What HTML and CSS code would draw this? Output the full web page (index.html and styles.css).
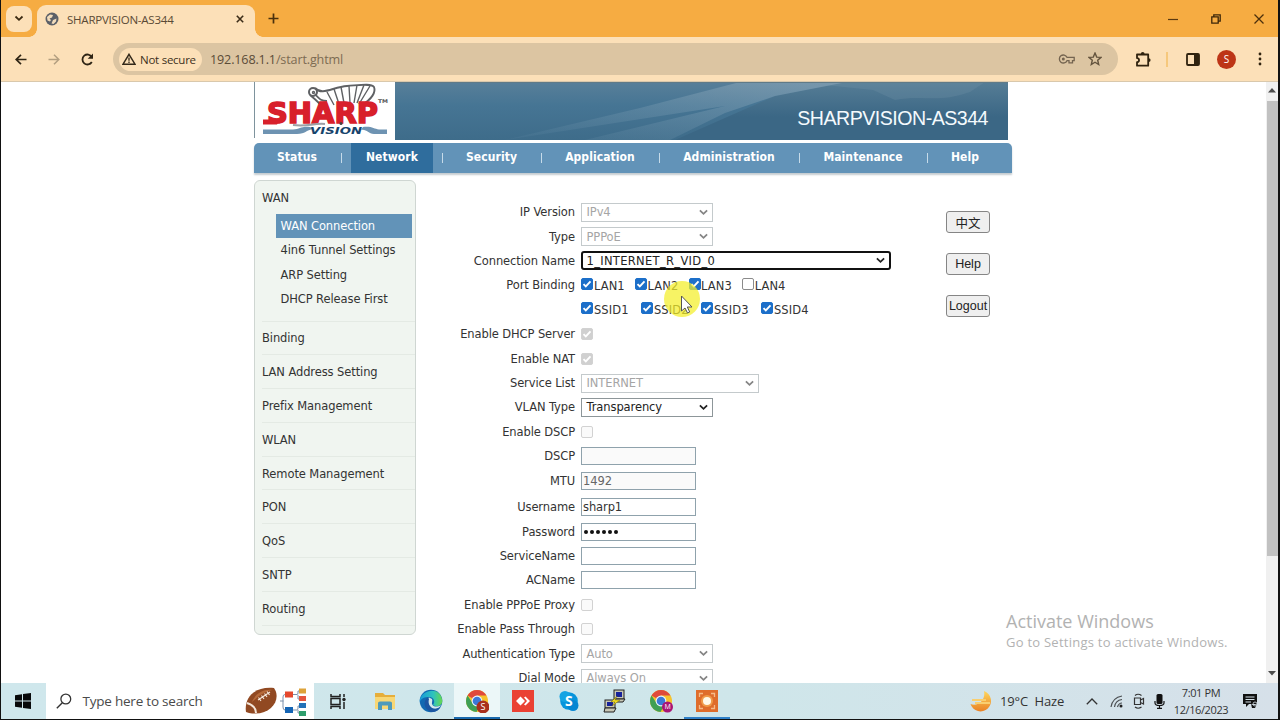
FILE: index.html
```html
<!DOCTYPE html>
<html lang="en">
<head>
<meta charset="utf-8">
<title>SHARPVISION-AS344</title>
<link rel="stylesheet" href="styles.css">
</head>
<body>
<svg width="0" height="0" class="defs">
  <symbol id="chev" viewBox="0 0 10 7"><path d="M1 1.2 5 5 9 1.2" fill="none" stroke="currentColor" stroke-width="2"/></symbol>
  <symbol id="tick" viewBox="0 0 12 12"><path d="M2.5 6.2 4.8 8.5 9.5 3.4" fill="none" stroke="currentColor" stroke-width="1.9"/></symbol>
  <symbol id="chrome" viewBox="0 0 24 24">
    <circle cx="12" cy="12" r="11" fill="#f6c32c"/>
    <path d="M12 12 2.5 6.5A11 11 0 0 1 21.5 6.5H12Z" fill="#df4a3c"/>
    <path d="M2.5 6.5A11 11 0 0 0 11.5 23L16 15 12 12 7.5 14Z" fill="#3f9f55"/>
    <circle cx="12" cy="12" r="5.4" fill="#eef5ff"/><circle cx="12" cy="12" r="4.3" fill="#3b79d8"/>
  </symbol>
</svg>
<div class="screen">
  <header class="tabs">
    <div class="tabmenu"><svg width="10" height="7"><path d="M1.5 1.5 5 4.8 8.5 1.5" fill="none" stroke="#3a2a12" stroke-width="1.8"/></svg></div>
    <div class="tab">
      <svg width="14" height="14" viewBox="0 0 14 14"><circle cx="7" cy="7" r="6.5" fill="#5c6068"/><path d="M2 5 5 2.6 8 3 7 5.5 4.5 6.5 6 8 5 9.5 2.5 8.5ZM8 8 11.5 6.5 11 9.5 8.5 12 6.5 11.5Z" fill="#f2dcbb"/></svg>
      <span class="tabtitle">SHARPVISION-AS344</span>
      <svg width="8" height="8"><path d="M.8.8 7.2 7.2M7.2.8.8 7.2" stroke="#3c2d18" stroke-width="1.6"/></svg>
    </div>
    <svg class="newtab" width="11" height="11"><path d="M5.5.5V10.5M.5 5.5H10.5" stroke="#4a300c" stroke-width="1.7"/></svg>
    <div class="winbtns">
      <svg width="10" height="10"><path d="M0 5.5H10" stroke="#5b3a10" stroke-width="1.2"/></svg>
      <svg width="10" height="10"><path d="M.8 2.8H7.2V9.2H.8ZM2.8 2.5V.8H9.2V7.2H7.5" fill="none" stroke="#3c2609" stroke-width="1.3"/></svg>
      <svg width="10" height="10"><path d="M.5.5 9.5 9.5M9.5.5.5 9.5" stroke="#4c300c" stroke-width="1.3"/></svg>
    </div>
  </header>
  <div class="toolbar">
    <div class="navbtns">
      <svg width="12" height="11"><path d="M6 .8 1.2 5.5 6 10.2M1.2 5.5H11.5" fill="none" stroke="#2e2414" stroke-width="1.7"/></svg>
      <svg width="12" height="11"><path d="M6 .8 10.8 5.5 6 10.2M10.8 5.5H.5" fill="none" stroke="#b39f80" stroke-width="1.5"/></svg>
      <svg width="13" height="13"><path d="M10.8 9A5 5 0 1 1 10.8 4L11 4.6" fill="none" stroke="#2e2414" stroke-width="1.8"/><path d="M12 .5V5.8H6.7Z" fill="#2e2414"/></svg>
    </div>
    <div class="omni">
      <div class="chip"><svg width="14" height="12"><path d="M7 1.3 13 11.2H1Z" fill="none" stroke="#33291a" stroke-width="1.5"/><path d="M7 4.5V7.8M7 8.5V10" stroke="#33291a" stroke-width="1.3"/></svg><span>Not secure</span></div>
      <span class="url">192.168.1.1<i>/start.ghtml</i></span>
      <svg class="key" width="17" height="10"><path d="M9 3.3A4 4 0 1 0 9 6.7H11V8.8H14.5V6.7H16.2V3.3Z" fill="none" stroke="#746450" stroke-width="1.3"/><circle cx="5.3" cy="5" r="1.5" fill="#746450"/></svg>
      <svg class="star" width="14" height="14"><path d="M7 1.1 8.7 5.1 13 5.4 9.7 8.2 10.7 12.5 7 10.2 3.3 12.5 4.3 8.2 1 5.4 5.3 5.1Z" fill="none" stroke="#64543e" stroke-width="1.4"/></svg>
    </div>
    <svg class="puzzle" width="17" height="17"><path d="M2 3.5H13.2V14.7H2V11.2A2 2 0 0 0 2 7.1Z" fill="none" stroke="#30230f" stroke-width="1.8" stroke-linejoin="round"/><path d="M5.8 3A1.9 1.9 0 0 1 9.6 3ZM13.7 7.2A1.9 1.9 0 0 1 13.7 11Z" fill="#30230f"/></svg>
    <span class="tsep"></span>
    <svg class="panel" width="14" height="13"><rect x="1" y="1" width="12" height="11" rx="1" fill="none" stroke="#30230f" stroke-width="1.8"/><path d="M8 1H13V12H8Z" fill="#30230f"/></svg>
    <span class="avatar">S</span>
    <svg class="dots" width="4" height="14"><g fill="#30230f"><circle cx="2" cy="2" r="1.4"/><circle cx="2" cy="7" r="1.4"/><circle cx="2" cy="12" r="1.4"/></g></svg>
  </div>

  <div class="viewport">
    <main class="page">
      <div class="banner">
        <svg class="logo" width="141" height="58" viewBox="-1 0 141 58">
          <rect x="-1" width="141" height="58" fill="#fff"/><path d="M-.5 0V56" stroke="#7e939d"/>
          <g fill="none" stroke="#5f6164" stroke-width="1.4">
            <circle cx="58" cy="10" r="4" stroke-width="2"/><circle cx="58.5" cy="10.5" r="1"/>
            <path d="M60 6C67 14 78 5 92 4 105 3 116 1 119 5 121 10 117 17 107 23M55 13C60 17 62 19 66 23M60 12C65 18 67 19 72 19" stroke-width="1.9"/>
            <path d="M72 10 79 23M79 7 84 22M86 5 89 21M94 4 95 21M102 3 99 21M109 3 102 21M115 4 104 22"/>
          </g>
          <path d="M8 47.500H38C45 47.500 46 44 55 45L59 47C50 48 51 52 42 52H8ZM108 45C117 44 119 47 124 47.500H132V52H119C113 52 112 47 106 48Z" fill="#6e93b2"/>
          <text x="12" y="41" class="lg-sharp" textLength="111" lengthAdjust="spacingAndGlyphs">SHARP</text>
          <path d="M8 37.500H25L22 42.500H8Z" fill="#d8202b"/>
          <path d="M38 43C52 45 58 41 70 42" fill="none" stroke="#9da1a6" stroke-width="2"/>
          <circle cx="86" cy="41.500" r="1.500" fill="#444"/>
          <text x="55" y="51.500" class="lg-vision" textLength="52" lengthAdjust="spacingAndGlyphs">VISION</text>
          <text x="123" y="21" class="lg-tm" textLength="10" lengthAdjust="spacingAndGlyphs">TM</text>
        </svg>
        <div class="hero">
          <svg class="rays" width="613" height="58" viewBox="0 0 613 58">
            <defs>
              <linearGradient id="hg" x1="0" y1="0" x2="0" y2="1"><stop offset="0" stop-color="#587f99"/><stop offset=".4" stop-color="#467594"/><stop offset="1" stop-color="#3e6c8a"/></linearGradient>
              <linearGradient id="rg" x1="0" y1="1" x2="1" y2="0"><stop offset="0" stop-color="#6890aa" stop-opacity=".1"/><stop offset="1" stop-color="#8ca7b9" stop-opacity=".65"/></linearGradient>
              <linearGradient id="dg" x1="0" y1="0" x2="0" y2="1"><stop offset="0" stop-color="#567d96"/><stop offset=".6" stop-color="#3b6785"/></linearGradient>
            </defs>
            <rect width="613" height="58" fill="url(#hg)"/>
            <path d="M280 58 380 14 450 0H613V58Z" fill="url(#dg)"/>
            <path d="M110 58 245 26 345 0H452L380 14 330 31 275 58H190L330 24Z" fill="url(#rg)"/>
            <path d="M400 0H590L575 10C540 22 530 12 500 18L478 8Z" fill="#7898ab" opacity=".25"/>
            <path d="M0 .5H613" stroke="#607a87"/>
          </svg>
          <span class="model">SHARPVISION-AS344</span>
        </div>
      </div>
      <nav class="menu">
        <a class="m1">Status</a><b></b><a class="on">Network</a><b></b><a class="m3">Security</a><b></b><a class="m4">Application</a><b></b><a class="m5">Administration</a><b></b><a class="m6">Maintenance</a><b></b><a class="m7">Help</a>
      </nav>
      <div class="cols">
        <aside class="side">
          <div class="group">
            <div class="top"><span>WAN</span></div>
            <div class="sub sel"><span>WAN Connection</span></div><div class="sub"><span>4in6 Tunnel Settings</span></div><div class="sub"><span>ARP Setting</span></div><div class="sub"><span>DHCP Release First</span></div>
          </div>
          <div class="item">Binding</div><div class="item">LAN Address Setting</div><div class="item">Prefix Management</div><div class="item">WLAN</div><div class="item">Remote Management</div><div class="item">PON</div><div class="item">QoS</div><div class="item">SNTP</div><div class="item">Routing</div>
        </aside>
        <section class="form">
          <div class="row"><label>IP Version</label><div class="select off">IPv4<svg><use href="#chev"/></svg></div></div>
          <div class="row"><label>Type</label><div class="select off">PPPoE<svg><use href="#chev"/></svg></div></div>
          <div class="row"><label>Connection Name</label><div class="select focus">1_INTERNET_R_VID_0<svg><use href="#chev"/></svg></div></div>
          <div class="row"><label>Port Binding</label><div class="checks lan">
            <span><i class="cb on"><svg><use href="#tick"/></svg></i>LAN1</span><span><i class="cb on"><svg><use href="#tick"/></svg></i>LAN2</span><span><i class="cb on"><svg><use href="#tick"/></svg></i>LAN3</span><span><i class="cb"></i>LAN4</span></div></div>
          <div class="row"><label></label><div class="checks ssid">
            <span><i class="cb on"><svg><use href="#tick"/></svg></i>SSID1</span><span><i class="cb on"><svg><use href="#tick"/></svg></i>SSID2</span><span><i class="cb on"><svg><use href="#tick"/></svg></i>SSID3</span><span><i class="cb on"><svg><use href="#tick"/></svg></i>SSID4</span></div></div>
          <div class="row"><label>Enable DHCP Server</label><i class="cb dis full"><svg><use href="#tick"/></svg></i></div>
          <div class="row"><label>Enable NAT</label><i class="cb dis full"><svg><use href="#tick"/></svg></i></div>
          <div class="row"><label>Service List</label><div class="select off wide">INTERNET<svg><use href="#chev"/></svg></div></div>
          <div class="row"><label>VLAN Type</label><div class="select">Transparency<svg><use href="#chev"/></svg></div></div>
          <div class="row"><label>Enable DSCP</label><i class="cb dis"></i></div>
          <div class="row"><label>DSCP</label><div class="text off"></div></div>
          <div class="row"><label>MTU</label><div class="text off">1492</div></div>
          <div class="row gap"><label>Username</label><div class="text">sharp1</div></div>
          <div class="row"><label>Password</label><div class="text pw"><u></u><u></u><u></u><u></u><u></u><u></u></div></div>
          <div class="row"><label>ServiceName</label><div class="text"></div></div>
          <div class="row"><label>ACName</label><div class="text"></div></div>
          <div class="row"><label>Enable PPPoE Proxy</label><i class="cb dis"></i></div>
          <div class="row"><label>Enable Pass Through</label><i class="cb dis"></i></div>
          <div class="row"><label>Authentication Type</label><div class="select off">Auto<svg><use href="#chev"/></svg></div></div>
          <div class="row"><label>Dial Mode</label><div class="select off">Always On<svg><use href="#chev"/></svg></div></div>
        </section>
        <div class="actions"><div class="btn zh">中文</div><div class="btn">Help</div><div class="btn">Logout</div></div>
      </div>
    </main>
    <div class="scroll">
      <svg width="8" height="5"><path d="M0 4.500 4 0 8 4.500Z" fill="#4b4b4b"/></svg>
      <div class="thumb"></div>
      <svg class="down" width="8" height="5"><path d="M0 0 4 4.500 8 0Z" fill="#4b4b4b"/></svg>
    </div>
  </div>

  <footer class="taskbar">
    <div class="start"><svg width="16" height="16"><path d="M0 2.300 7 1.200V7.500H0ZM8 1 16 0V7.500H8ZM0 8.500H7V14.800L0 13.700ZM8 8.500H16V16L8 15Z" fill="#08090a"/></svg></div>
    <div class="search">
      <svg width="16" height="16"><circle cx="9.800" cy="6" r="4.900" fill="none" stroke="#333" stroke-width="1.300"/><path d="M6.300 9.700.8 15.200" stroke="#333" stroke-width="1.400"/></svg>
      <span>Type here to search</span>
      <svg class="ball" width="64" height="32" viewBox="0 0 64 32">
        <path d="M35 16H38.500M48 9.500H40Q38 9.500 38 12V22Q38 25 40 25H48M48 9.500H52Q53 9.500 53 8V6H55M53 10V14H56M48 25H52Q53 25 53 23V21H56M53 25V28H56" fill="none" stroke="#7b8faa"/>
        <rect x="40" y="6.500" width="8" height="6" fill="#e5482d"/><rect x="40" y="22" width="8" height="6" fill="#1464b4"/>
        <rect x="54" y="3.500" width="7" height="5" fill="#dda33a"/><rect x="54" y="11" width="7" height="5" fill="#e5553d"/><rect x="54" y="18" width="7" height="5" fill="#2372b8"/><rect x="54" y="26" width="7" height="5" fill="#2f9e6d"/>
        <path d="M1 27C-1 14 8 1 29 3 37 14 26 32 4 28Z" fill="#914922"/><path d="M7 17C10 9 18 4 27 5 18 7 13 12 7 17Z" fill="#b66a3a"/>
        <path d="M2 18C8 20 11 24 11 28" stroke="#f4e6da" fill="none" stroke-width="2"/><path d="M13 15 25 7M13.500 12.500 16 16M16.500 10.500 19 14M19.500 8.500 22 12M22 6.500 24.500 10" stroke="#f4e6da" fill="none" stroke-width="1.200"/>
      </svg>
    </div>
    <div class="apps">
      <div class="app"><svg width="16" height="15"><path d="M1 0V2.500H10V0M1 15V12.500H10V15M1 4.500H10V10.500H1ZM14 0V3M14 8V15" fill="none" stroke="#222" stroke-width="1.500"/><circle cx="14" cy="5.500" r="1.700" fill="#222"/></svg></div>
      <div class="app"><svg width="22" height="19"><path d="M1 1H9L11 3H21V17H1Z" fill="#e6ae3b"/><path d="M1 5H21V17H1Z" fill="#f8d775"/><path d="M4 18V11Q4 9.500 6 9.500H16Q18 9.500 18 11V18H14V13.500H8V18Z" fill="#4f9abb"/></svg></div>
      <div class="app"><svg width="24" height="24" viewBox="0 0 24 24"><defs><linearGradient id="eg" x1="0" x2="1"><stop offset="0" stop-color="#189bd8"/><stop offset=".6" stop-color="#2fc3bd"/><stop offset="1" stop-color="#66d84e"/></linearGradient></defs><circle cx="12" cy="12" r="11.300" fill="#1269b2"/><path d="M.8 11C3 0 22-3 23.300 12 23 18 16 18 14 16 17 12 14 8 10 8 6 8 2 9 .8 13Z" fill="url(#eg)"/><path d="M10 8.500C5 12 8 21 15 20 19 20 21 18 22 16 19 18 15 18 13.500 16 12 14 14 12 13 10Z" fill="#d3e8ec"/><path d="M9 8.500C4 11 4 20 12 23 17 23 20 21 21 18.500 14 22 8 17 10 10Z" fill="#1b56a2"/></svg></div>
      <div class="app lit"><svg width="24" height="24"><use href="#chrome"/><circle cx="18" cy="18" r="6.500" fill="#a92f1d"/></svg><em>S</em></div>
      <div class="app"><svg width="22" height="22"><rect width="22" height="22" fill="#ea4133"/><path d="M8.500 6.500 13 11 8.500 15.500 4 11ZM12 7.500 13.500 6.500 18 11 13.500 15.500 12 14.500 15 11Z" fill="#fff"/></svg></div>
      <div class="app"><svg width="20" height="22"><circle cx="10" cy="11" r="8.800" fill="#0795dc"/><circle cx="6" cy="6.500" r="5.500" fill="#15a4e3"/><circle cx="14" cy="15.500" r="5.500" fill="#0786d2"/></svg><em class="sk">S</em></div>
      <div class="app"><svg width="24" height="24"><g stroke="#222" fill="#c7c7b5"><rect x="11" y="1" width="10" height="9"/><path d="M11 10H22L20 13H10Z"/><rect x="2" y="11" width="10" height="8"/><path d="M2 19H13L11 23H1Z"/></g><rect x="13" y="3" width="6" height="5" fill="#16229a"/><rect x="4" y="13" width="6" height="4" fill="#16229a"/><path d="M14 7 8 13H12L9 17 17 11H12Z" fill="#f4df20" stroke="#756b10" stroke-width=".5"/></svg></div>
      <div class="app"><svg width="24" height="24"><use href="#chrome"/><circle cx="18.500" cy="18" r="5.500" fill="#a81576"/></svg><em class="pm">M</em></div>
      <div class="app under"><svg width="22" height="22"><rect width="22" height="22" fill="#df6d2b"/><path d="M3.500 7V3.500H7M15 3.500H18.500V7M18.500 15V18.500H15M7 18.500H3.500V15" stroke="#f5bb88" fill="none" stroke-width="1.300"/><circle cx="11" cy="11" r="6" fill="#f09b49"/><circle cx="11" cy="11" r="4" fill="#fff9e9"/></svg></div>
    </div>
    <div class="tray">
      <svg class="moon" width="22" height="21"><defs><linearGradient id="mg" x1="0" y1="0" x2="0" y2="1"><stop offset="0" stop-color="#ffd75c"/><stop offset="1" stop-color="#e98125"/></linearGradient></defs><path d="M14 0A10.500 10.500 0 1 1 .5 13C8 16 16 9 14 0Z" fill="url(#mg)"/><path d="M2 9H16M5 12H20" stroke="#f9cf70" stroke-width="2"/></svg>
      <span class="wx">19°C&nbsp; Haze</span>
      <svg class="up" width="12" height="7"><path d="M.8 6.200 6 1 11.200 6.200" fill="none" stroke="#333" stroke-width="1.300"/></svg>
      <svg class="wifi" width="13" height="13"><path d="M1 12C2 6 6 2 12 1M4.500 12C5 8 8 5 12 4.500M7.500 12C8 10 10 8 12 8" fill="none" stroke="#4b4f52" stroke-width="1.200"/><circle cx="11" cy="11" r="1.500" fill="#222"/></svg>
      <svg class="meet" width="12" height="16"><path d="M1.500 5H7.500V11.500H1.500ZM7.500 7 10.500 5.500V11L7.500 9.500M2 2.500Q5 0 8.500 2.500M2 14Q5 16.500 8.500 14" fill="none" stroke="#333" stroke-width="1.200"/></svg>
      <svg class="mic" width="11" height="15"><rect x="2.500" y="0" width="6" height="10" rx="1.500" fill="#111"/><path d="M1 7V9Q1 11.500 5.500 11.500 10 11.500 10 9V7M5.500 11V14M3 14.300H8" fill="none" stroke="#111" stroke-width="1.200"/></svg>
      <div class="clock"><span>7:01 PM</span><span>12/16/2023</span></div>
      <svg class="note" width="17" height="16"><path d="M1 1H15V11H7L4 14V11H1Z" fill="#111"/><path d="M3.500 4H12.500M3.500 6.500H12.500M3.500 9H9" stroke="#d5e1e8"/><path d="M9 11A4 3 0 0 0 15 11L13 15H10Z" fill="#111"/><circle cx="13" cy="11" r="2" fill="none" stroke="#d5e1e8" stroke-width=".8"/></svg>
    </div>
  </footer>
</div>
<div class="activate"><p>Activate Windows</p><small>Go to Settings to activate Windows.</small></div>
<svg class="pointer" width="38" height="38"><circle cx="18" cy="18" r="18" fill="#f4ee28" opacity=".72"/><path d="M17.500 15V30L21 27 23.500 32 25.700 31 23.300 26H28Z" fill="#fff" stroke="#555" stroke-width="1"/></svg>
</body>
</html>
```
FILE: styles.css
```css
*{box-sizing:border-box}
body{margin:0;width:1280px;height:720px;overflow:hidden;position:relative;background:#111;font-family:"Open Sans","Noto Sans",sans-serif}
svg{display:block;flex:none}
.defs{position:absolute}
.screen{width:1280px;height:720px;padding:0 2px 1px 1px;display:flex;flex-direction:column}
.tabs{height:37px;background:#f6ac42;display:flex;align-items:center;flex:none;position:relative}
.tabmenu{width:26px;height:26px;border-radius:8px;background:#fce0b8;margin-left:5px;display:flex;align-items:center;justify-content:center}
.tab{width:218px;height:32px;align-self:flex-end;margin-left:5px;background:#fce0b8;border-radius:9px 9px 0 0;display:flex;align-items:center;padding:0 11px 4px 8px;position:relative}
.tab:before,.tab:after{content:"";position:absolute;bottom:0;width:8px;height:8px}
.tab:before{left:-8px;background:radial-gradient(circle at 0 0,transparent 7.5px,#fce0b8 8px)}
.tab:after{right:-8px;background:radial-gradient(circle at 100% 0,transparent 7.5px,#fce0b8 8px)}
.tabtitle{font-size:11.5px;color:#5a4a36;margin-left:8px;flex:1;letter-spacing:-.22px;white-space:nowrap}
.newtab{margin-left:13px}
.winbtns{margin-left:auto;display:flex;gap:33px;padding-right:14px}
.toolbar{height:45px;background:#fce0b8;border-bottom:1px solid #d9c8ac;flex:none;display:flex;align-items:center}
.navbtns{display:flex;align-items:center;gap:21px;margin-left:14px;width:98px}
.omni{width:1005px;height:32px;border-radius:16px;background:#dcc5a2;display:flex;align-items:center;padding-left:6px}
.chip{width:83px;height:23px;border-radius:12px;background:#fce0b8;display:flex;align-items:center;padding-left:3px;font-size:11.5px;letter-spacing:-.25px;color:#3c3020;white-space:nowrap}
.chip span{margin-left:4px}
.url{font-size:12.6px;letter-spacing:-.15px;color:#5b4c38;margin-left:8px;flex:1}
.url i{font-style:normal;color:#7c6b52}
.key{margin-right:13.5px}.star{margin-right:16px}
.puzzle{margin-left:17px}
.tsep{width:2px;height:15px;background:#f6c87c;margin:0 18px 0 14px}
.avatar{width:19px;height:19px;border-radius:50%;background:#bd3516;color:#fff;font-size:10px;display:flex;align-items:center;justify-content:center;margin:0 22px 0 17px}
.viewport{height:601px;background:#fff;display:flex;overflow:hidden;flex:none}
.page{width:758px;margin-left:253px;flex:none;font:11.5px "DejaVu Sans",sans-serif;letter-spacing:-.1px;color:#333}
.banner{display:flex;height:58px}
.hero{width:613px;height:58px;position:relative}
.rays{position:absolute}
.model{position:absolute;right:20px;top:25px;font:19.6px/23px "Liberation Sans",Arial,sans-serif;color:#f4fafd;letter-spacing:-.5px}
.lg-sharp{font:bold 29px "DejaVu Sans",sans-serif;letter-spacing:0;fill:#d8202b;stroke:#d8202b;stroke-width:1.6}
.lg-vision{font:italic bold 9.5px "DejaVu Sans",sans-serif;letter-spacing:0;fill:#17446b}
.lg-tm{font:bold 5px "DejaVu Sans",sans-serif;letter-spacing:0;fill:#555}
.menu{height:30px;margin-top:3px;background:#6293b8;border-radius:5px 5px 0 0;box-shadow:0 2px 2px #c5ccd0;display:flex;align-items:center;color:#fff;font:bold 12px "DejaVu Sans Condensed","DejaVu Sans",sans-serif}
.menu a{text-align:center;white-space:nowrap;padding-bottom:2px;letter-spacing:.08px}
.menu b{width:1px;height:10px;margin:-1px .5px 0;background:#c6dbe9}
.m1{width:86px}.menu .on{width:82px;height:30px;margin:0 8px 0 9px;padding-top:7px;background:#2f6d9d}
.m3{width:97px}.m4{width:116px}.m5{width:138px}.m6{width:126px}.m7{width:74px}
.cols{display:flex;margin-top:7px}
.side{width:162px;height:455px;border:1px solid #cfd6d2;border-radius:6px;background:#f0f5f0;padding:0 0 0 7px;flex:none}
.group{height:140.5px;padding-top:5px;border-bottom:1px solid #e4eae4}
.top{height:27.5px;padding-top:5px}
.sub{height:24.4px;padding:5.4px 0 0 18.5px;color:#333;white-space:nowrap}
.sub span,.top span{display:block}
.sub.sel{margin:0 3px 0 14px;padding-left:4.5px;background:#6293b8;color:#fff}
.item{height:33.8px;padding-top:1px;border-bottom:1px solid #e4eae4;display:flex;align-items:center}
.form{width:500px;padding-top:19.9px;height:520px;flex:none}
.row{height:24.43px;display:flex;align-items:center;white-space:nowrap}
.gap{margin-top:2px}
.row label{width:159px;text-align:right;margin-right:6px}
.select{width:132px;height:19px;border:1px solid #8d9699;display:flex;align-items:center;padding-left:4.5px;color:#222;background:#fff}
.select svg{width:9px;height:7px;margin:0 4px 0 auto}
.select.off{color:#a5a5a5;border-color:#c4cacc}
.select.off svg{color:#858585}
.select.wide{width:178px}
.select.focus{width:310px;border:2px solid #111;border-radius:3px;padding-left:3.5px;letter-spacing:.32px}
.text{width:115px;height:18px;border:1px solid #8fa2ac;padding-left:1px;display:flex;align-items:center;background:#fff}
.text.off{background:#fafafa;color:#666}
.pw{gap:2px;padding-left:2px}.pw u{width:4px;height:4px;border-radius:50%;background:#111}
.cb{width:12px;height:12px;border:1px solid #8b8b8b;border-radius:2px;background:#fff;display:block;flex:none;margin-left:.4px}
.cb svg{width:12px;height:12px;margin:-1px;color:#fff}
.cb.on{background:#1c6fc9;border-color:#1c6fc9}
.cb.dis{background:#fafafa;border-color:#d2d2d2}
.cb.full{background:#d0d0d0}
.checks{display:flex;letter-spacing:.1px}
.checks span{display:flex;align-items:center;padding-top:1px}
.checks .cb{margin-top:-4px;margin-right:.5px}
.lan span{width:53.6px}.ssid span{width:60px}
.actions{padding:31px 0 0 30px;display:flex;flex-direction:column;gap:20px}
.btn{width:44px;height:22px;border:1px solid #858585;border-radius:3px;background:#efefef;color:#222;font:12.5px "Liberation Sans","Noto Sans CJK SC",sans-serif;letter-spacing:0;display:flex;align-items:center;justify-content:center}
.scroll{width:12px;margin-left:auto;background:#f0f0f0;display:flex;flex-direction:column;align-items:center;padding:6px 0 7px}
.thumb{width:11px;height:455px;margin-top:8px;background:#c1c1c1}
.down{margin-top:auto}
.taskbar{height:36px;background:linear-gradient(90deg,#cfe7ec,#cfe6ea 60%,#d6e0e9);display:flex;align-items:center;flex:none}
.start{width:45px;display:flex;justify-content:center;padding-right:2px}
.search{width:268px;height:36px;background:#fff;display:flex;align-items:center;padding-left:10px;color:#4a4a4a;font-size:13.5px}
.search span{margin-left:10.5px;white-space:nowrap;letter-spacing:-.22px}
.ball{margin-left:auto;margin-right:5px}
.apps{display:flex}
.app{width:46px;height:36px;display:flex;align-items:center;justify-content:center;position:relative}
.app:first-child{width:48px}
.app.lit{background:linear-gradient(#ecf7f8 34px,#1b69ad 34px)}
.app.under{background:linear-gradient(transparent 34px,#2f80c8 34px)}
.app em{position:absolute;left:26.5px;top:17px;font:9px/13px "Open Sans",sans-serif;color:#fff}
.app em.sk{left:19px;top:9px;font:bold 14px/18px "Open Sans",sans-serif}
.app em.pm{font-size:7px}
.tray{margin-left:auto;width:308px;display:flex;align-items:center;color:#333}
.wx{font-size:13px;letter-spacing:-.15px;margin-left:8px;width:83px;white-space:nowrap}
.up{margin-left:3px}.wifi{margin-left:12px}.meet{margin-left:10px}.mic{margin-left:9px}
.clock{width:66px;display:flex;flex-direction:column;align-items:center;font-size:11px;line-height:17px;margin-left:3px;letter-spacing:-.4px}
.note{margin-left:8px}
.activate{position:absolute;left:1006px;top:610px;color:#b2b2b2;white-space:nowrap}
.activate p{margin:0;font-size:18px;line-height:22px}
.activate small{display:block;font-size:13px;letter-spacing:.25px;line-height:21px}
.pointer{position:absolute;left:664px;top:281px}
```
